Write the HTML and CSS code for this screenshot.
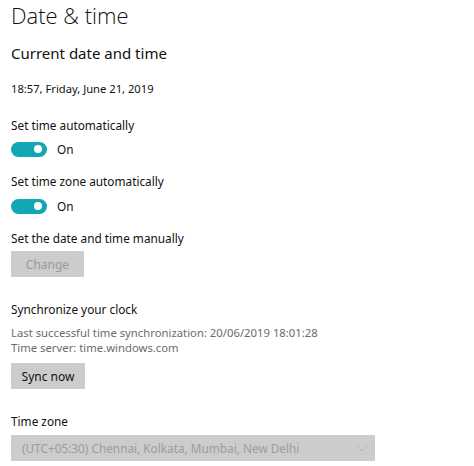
FILE: index.html
```html
<!DOCTYPE html>
<html>
<head>
<meta charset="utf-8">
<link rel="stylesheet" href="styles.css">
</head>
<body>
<div class="page">
  <h1 class="title">Date &amp; time</h1>
  <h2 class="subtitle">Current date and time</h2>
  <div class="now">18:57, Friday, June 21, 2019</div>

  <div class="label l1">Set time automatically</div>
  <div class="toggle-row t1"><span class="toggle"><span class="knob"></span></span><span class="state">On</span></div>

  <div class="label l2">Set time zone automatically</div>
  <div class="toggle-row t2"><span class="toggle"><span class="knob"></span></span><span class="state">On</span></div>

  <div class="label l2">Set the date and time manually</div>
  <div class="btn disabled">Change</div>

  <div class="label l3">Synchronize your clock</div>
  <div class="info first">Last successful time synchronization: 20/06/2019 18:01:28</div>
  <div class="info">Time server: time.windows.com</div>
  <div class="btn sync">Sync now</div>

  <div class="label l3">Time zone</div>
  <div class="select">
    <span>(UTC+05:30) Chennai, Kolkata, Mumbai, New Delhi</span>
    <svg class="chev" width="12" height="7" viewBox="0 0 12 7"><path d="M1 1 L6 6 L11 1" fill="none" stroke="#b4b4b4" stroke-width="1"/></svg>
  </div>
</div>
</body>
</html>
```
FILE: styles.css
```css
html, body { margin: 0; padding: 0; background: #fff; }
body { font-family: "Noto Sans", "Open Sans", sans-serif; color: #000; }
.page { padding: 0 0 0 11px; display: flex; flex-direction: column; align-items: flex-start; }
.title { font-weight: 300; font-size: 22px; line-height: 30px; margin: 0; font-family: "Open Sans", sans-serif; color: #111; }
.subtitle { font-weight: 400; font-size: 15px; line-height: 20px; margin: 13px 0 0 0; color: #111; }
.now { font-size: 11.2px; line-height: 16px; margin-top: 18px; color: #111; }
.label { font-size: 11.8px; line-height: 16px; color: #111; }
.l1 { margin-top: 20px; }
.l2 { margin-top: 16px; }
.l3 { margin-top: 24px; }
.toggle-row { display: flex; align-items: center; height: 16px; }
.t1 { margin-top: 8px; }
.t2 { margin-top: 9px; }
.toggle { width: 36px; height: 15px; border-radius: 8px; background: #13a6b4; position: relative; display: inline-block; }
.knob { position: absolute; right: 5px; top: 3.5px; width: 8px; height: 8px; border-radius: 50%; background: #fff; }
.state { margin-left: 10px; font-size: 11.8px; line-height: 16px; color: #111; }
.btn { width: 73px; height: 26px; background: #cccccc; display: flex; align-items: center; justify-content: center; font-size: 12px; margin-top: 5px; color: #111; }
.btn.disabled { color: #9a9a9a; }
.sync { width: 74px; margin-top: 8px; }
.info { font-size: 11.3px; line-height: 15px; color: #6b6b6b; }
.info.first { margin-top: 8px; }
.select { width: 364px; height: 26px; background: #cccccc; margin-top: 6px; display: flex; align-items: center; justify-content: space-between; box-sizing: border-box; padding: 0 7px 0 11px; font-size: 11.8px; color: #9c9c9c; }
.chev { display: block; }
```
